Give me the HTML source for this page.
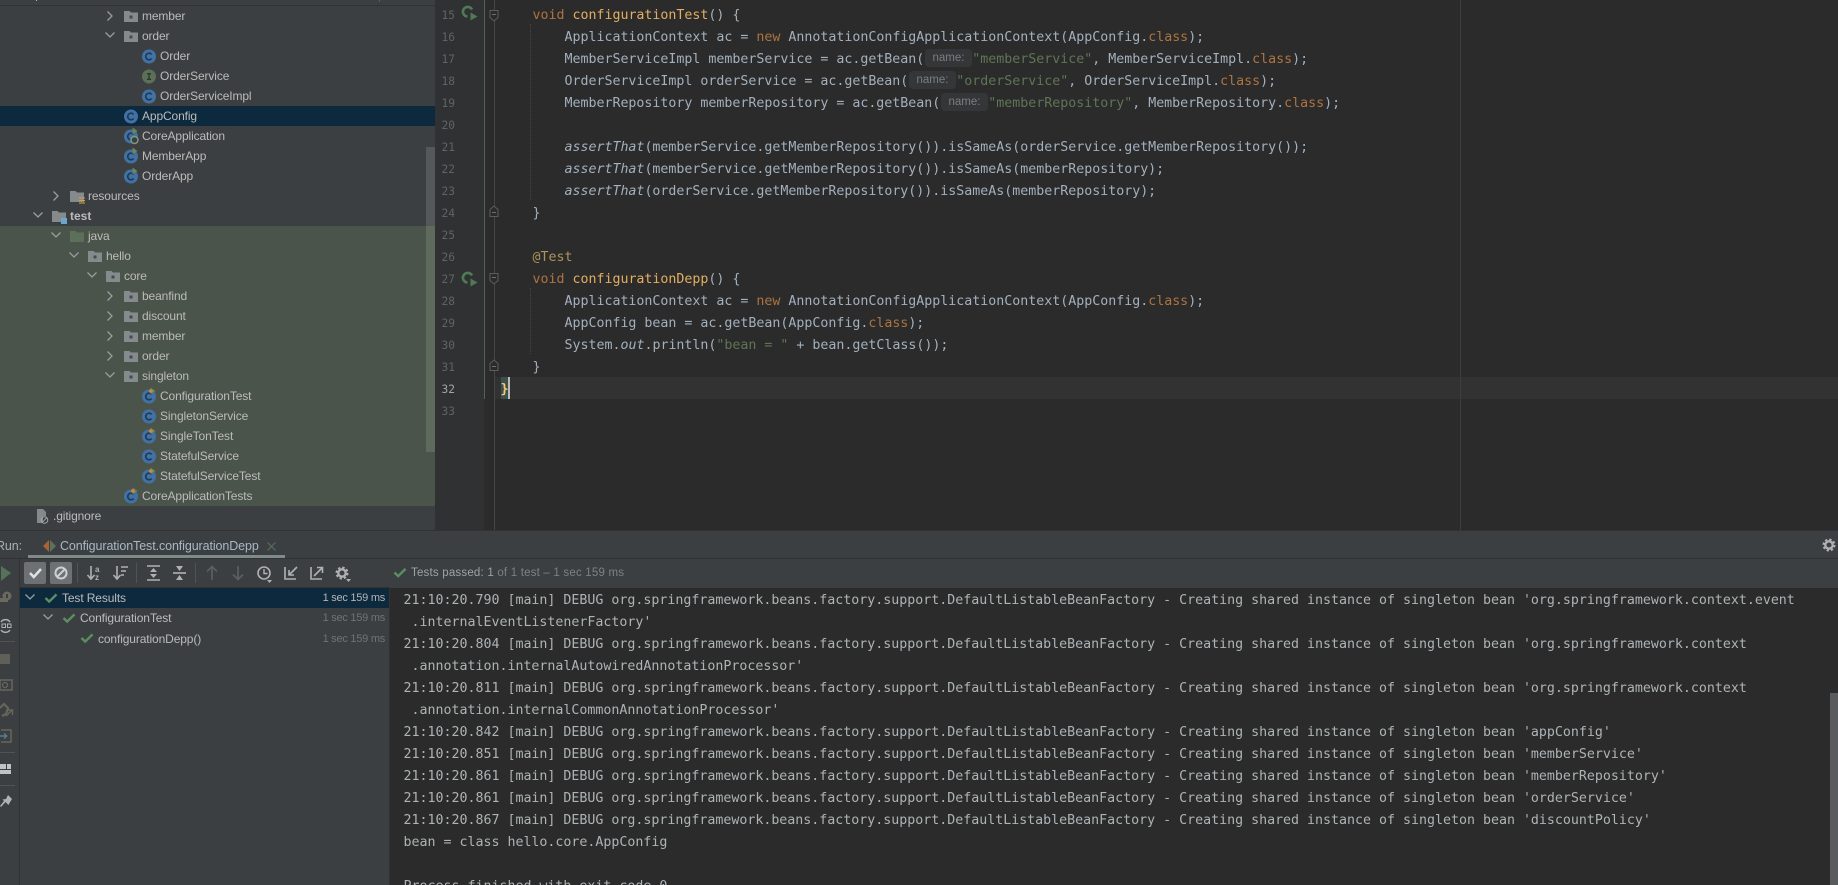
<!DOCTYPE html>
<html><head><meta charset="utf-8"><title>IDE</title>
<style>
html,body{margin:0;padding:0;background:#2b2b2b}
#r{position:relative;width:1838px;height:885px;overflow:hidden;background:#2b2b2b;font-family:"Liberation Sans",sans-serif}
#r div.b{position:absolute}
.t{position:absolute;height:20px;line-height:21px;font-size:12px;letter-spacing:-.12px;color:#bbb;white-space:nowrap}
.n{line-height:20px}
pre{position:absolute;margin:0;font-family:"DejaVu Sans Mono","Liberation Mono",monospace;font-size:13.29px;line-height:22px;color:#a3b0bd;white-space:pre}
.k{color:#ad7440}.m{color:#e3ae62}.s{color:#5f7555}.i{font-style:italic}.a{color:#ab9459}.y{color:#cc7832}
.h{position:absolute;width:47px;height:18px;background:#343638;border-radius:4px;color:#7a7e80;font:11.5px/18px "Liberation Sans",sans-serif;text-align:center}
.d{color:#6f7375;font-size:11px;letter-spacing:-.25px;line-height:20px}
</style></head><body><div id="r">
<!-- sidebar -->
<div class="b" style="left:0;top:0;width:435px;height:531px;background:#3c3f41"></div>
<div class="b" style="left:0;top:5px;width:435px;height:1px;background:#323232"></div>
<div class="b" style="left:0;top:106px;width:435px;height:20px;background:#0d293e"></div>
<div class="b" style="left:0;top:226px;width:435px;height:280px;background:#4b544a"></div>
<div class="b" style="left:426px;top:147px;width:9px;height:79px;background:#55585a"></div>
<div class="b" style="left:426px;top:226px;width:9px;height:226px;background:#5e6a5b"></div>
<div class="t" style="left:142px;top:6px">member</div>
<div class="t" style="left:142px;top:26px">order</div>
<div class="t" style="left:160px;top:46px">Order</div>
<div class="t" style="left:160px;top:66px">OrderService</div>
<div class="t" style="left:160px;top:86px">OrderServiceImpl</div>
<div class="t" style="left:142px;top:106px">AppConfig</div>
<div class="t" style="left:142px;top:126px">CoreApplication</div>
<div class="t" style="left:142px;top:146px">MemberApp</div>
<div class="t" style="left:142px;top:166px">OrderApp</div>
<div class="t" style="left:88px;top:186px">resources</div>
<div class="t" style="left:70px;top:206px;font-weight:bold;letter-spacing:0">test</div>
<div class="t" style="left:88px;top:226px">java</div>
<div class="t" style="left:106px;top:246px">hello</div>
<div class="t" style="left:124px;top:266px">core</div>
<div class="t" style="left:142px;top:286px">beanfind</div>
<div class="t" style="left:142px;top:306px">discount</div>
<div class="t" style="left:142px;top:326px">member</div>
<div class="t" style="left:142px;top:346px">order</div>
<div class="t" style="left:142px;top:366px">singleton</div>
<div class="t" style="left:160px;top:386px">ConfigurationTest</div>
<div class="t" style="left:160px;top:406px">SingletonService</div>
<div class="t" style="left:160px;top:426px">SingleTonTest</div>
<div class="t" style="left:160px;top:446px">StatefulService</div>
<div class="t" style="left:160px;top:466px">StatefulServiceTest</div>
<div class="t" style="left:142px;top:486px">CoreApplicationTests</div>
<div class="t" style="left:53px;top:506px">.gitignore</div>
<!-- editor -->
<div class="b" style="left:435px;top:0;width:49px;height:531px;background:#2f3133"></div>
<div class="b" style="left:484px;top:0;width:1px;height:399px;background:#4d6652"></div>
<div class="b" style="left:495px;top:377px;width:1343px;height:22px;background:#323232"></div>
<div class="b" style="left:494px;top:0;width:1px;height:531px;background:#454545"></div>
<div class="b" style="left:1460px;top:0;width:1px;height:531px;background:#3e3e3e"></div>
<div class="b" style="left:530px;top:24px;width:0;height:176px;border-left:1px dotted #454545"></div>
<div class="b" style="left:530px;top:288px;width:0;height:66px;border-left:1px dotted #454545"></div>
<div class="b" style="left:501px;top:377px;width:8px;height:22px;background:#3b514d"></div>
<div class="b" style="left:508px;top:377px;width:2px;height:22px;background:#bbb"></div>
<pre style="left:435px;top:5px;width:20px;text-align:right;font-size:11.2px;color:#606366">15
16
17
18
19
20
21
22
23
24
25
26
27
28
29
30
31
<span style="color:#a4a3a3">32</span>
33</pre>
<pre style="left:500.5px;top:5px">    <span class="k">void</span> <span class="m">configurationTest</span>() {
        ApplicationContext ac = <span class="k">new</span> AnnotationConfigApplicationContext(AppConfig.<span class="k">class</span>);
        MemberServiceImpl memberService = ac.getBean(      <span class="s">"memberService"</span>, MemberServiceImpl.<span class="k">class</span>);
        OrderServiceImpl orderService = ac.getBean(      <span class="s">"orderService"</span>, OrderServiceImpl.<span class="k">class</span>);
        MemberRepository memberRepository = ac.getBean(      <span class="s">"memberRepository"</span>, MemberRepository.<span class="k">class</span>);

        <span class="i">assertThat</span>(memberService.getMemberRepository()).isSameAs(orderService.getMemberRepository());
        <span class="i">assertThat</span>(memberService.getMemberRepository()).isSameAs(memberRepository);
        <span class="i">assertThat</span>(orderService.getMemberRepository()).isSameAs(memberRepository);
    }

    <span class="a">@Test</span>
    <span class="k">void</span> <span class="m">configurationDepp</span>() {
        ApplicationContext ac = <span class="k">new</span> AnnotationConfigApplicationContext(AppConfig.<span class="k">class</span>);
        AppConfig bean = ac.getBean(AppConfig.<span class="k">class</span>);
        System.<span class="i">out</span>.println(<span class="s">"bean = "</span> + bean.getClass());
    }
<span style="color:#ffc66d;font-weight:bold">}</span></pre>
<div class="h" style="left:925px;top:49px">name:</div>
<div class="h" style="left:909px;top:71px">name:</div>
<div class="h" style="left:941px;top:93px">name:</div>
<!-- bottom panel -->
<div class="b" style="left:0;top:530px;width:1838px;height:1px;background:#323232"></div>
<div class="b" style="left:0;top:531px;width:1838px;height:57px;background:#3c3f41"></div>
<div class="b" style="left:0;top:558px;width:1838px;height:1px;background:#323232"></div>
<div class="b" style="left:0;top:587px;width:390px;height:298px;background:#3c3f41"></div>
<div class="b" style="left:20px;top:587px;width:370px;height:1px;background:#323232"></div>
<div class="b" style="left:19px;top:559px;width:1px;height:326px;background:#323232"></div>
<div class="b" style="left:389px;top:587px;width:1px;height:298px;background:#323232"></div>
<div class="b" style="left:28px;top:555px;width:257px;height:3px;background:#7f8b88"></div>
<div class="b" style="left:20px;top:588px;width:369px;height:20px;background:#0d293e"></div>
<div class="t" style="left:-4px;top:536px;font-size:12.5px;color:#a9b0b5">Run:</div>
<div class="t" style="left:60px;top:536px;font-size:12.5px;letter-spacing:-.1px;color:#a9b7c6">ConfigurationTest.configurationDepp</div>
<div class="t" style="left:411px;top:563px;font-size:11.5px;letter-spacing:.2px;color:#9fa3a6">Tests passed: <span>1</span> <span style="color:#7c8184">of 1 test – 1 sec 159 ms</span></div>
<div class="t n" style="left:62px;top:588px">Test Results</div>
<div class="t n" style="left:80px;top:608px">ConfigurationTest</div>
<div class="t n" style="left:98px;top:629px">configurationDepp()</div>
<div class="t d" style="right:1453px;top:588px;color:#b5b5b5">1 sec 159 ms</div>
<div class="t d" style="right:1453px;top:608px">1 sec 159 ms</div>
<div class="t d" style="right:1453px;top:629px">1 sec 159 ms</div>
<!-- console -->
<div class="b" style="left:1830px;top:693px;width:8px;height:192px;background:#595b5c"></div>
<pre style="left:403.5px;top:590.3px;color:#aeb3b6">21:10:20.790 [main] DEBUG org.springframework.beans.factory.support.DefaultListableBeanFactory - Creating shared instance of singleton bean 'org.springframework.context.event
 .internalEventListenerFactory'
21:10:20.804 [main] DEBUG org.springframework.beans.factory.support.DefaultListableBeanFactory - Creating shared instance of singleton bean 'org.springframework.context
 .annotation.internalAutowiredAnnotationProcessor'
21:10:20.811 [main] DEBUG org.springframework.beans.factory.support.DefaultListableBeanFactory - Creating shared instance of singleton bean 'org.springframework.context
 .annotation.internalCommonAnnotationProcessor'
21:10:20.842 [main] DEBUG org.springframework.beans.factory.support.DefaultListableBeanFactory - Creating shared instance of singleton bean 'appConfig'
21:10:20.851 [main] DEBUG org.springframework.beans.factory.support.DefaultListableBeanFactory - Creating shared instance of singleton bean 'memberService'
21:10:20.861 [main] DEBUG org.springframework.beans.factory.support.DefaultListableBeanFactory - Creating shared instance of singleton bean 'memberRepository'
21:10:20.861 [main] DEBUG org.springframework.beans.factory.support.DefaultListableBeanFactory - Creating shared instance of singleton bean 'orderService'
21:10:20.867 [main] DEBUG org.springframework.beans.factory.support.DefaultListableBeanFactory - Creating shared instance of singleton bean 'discountPolicy'
bean = class hello.core.AppConfig

Process finished with exit code 0</pre>
<!-- icons -->
<svg width="1838" height="885" style="position:absolute;left:0;top:0" fill="none">
<defs>
<symbol id="chR" overflow="visible"><path d="M-2.5-4.5 2-0 -2.5 4.5" stroke="#9a9da0" stroke-width="1.3"/></symbol>
<symbol id="chD" overflow="visible"><path d="M-4.5-2.5 0 2-0 2 4.5-2.5" stroke="#9a9da0" stroke-width="1.3"/></symbol>
<symbol id="fo" overflow="visible"><path d="M0 0h5.5L7 1.5h7V11H0z" fill="#858a8d"/><rect x="5.5" y="4.5" width="3" height="3" fill="#47494b"/></symbol>
<symbol id="fp" overflow="visible"><path d="M0 0h5.5L7 1.5h7V11H0z" fill="#858a8d"/></symbol>
<symbol id="fj" overflow="visible"><path d="M0 0h5.5L7 1.5h7V11H0z" fill="#5c7059"/></symbol>
<symbol id="c" overflow="visible"><circle cx="7" cy="7" r="7" fill="#4272a4"/><path d="M9.6 4.9A3.3 3.3 0 1 0 9.6 9.1" stroke="#1e3a5a" stroke-width="1.7"/></symbol>
<symbol id="ii" overflow="visible"><circle cx="7" cy="7" r="7" fill="#5a7058"/><path d="M5 4.2h4M5 9.8h4M7 4.2v5.6" stroke="#2e352d" stroke-width="1.3"/></symbol>
<symbol id="rn" overflow="visible"><path d="M8.5-2 13.5 1.5 8.5 5z" fill="#6a8759"/></symbol>
<symbol id="tt" overflow="visible"><path d="M8.5-2 13.5 1.5 8.5 5z" fill="#6a8759"/><circle cx="8.8" cy="1.5" r="1.8" fill="#d8843a"/></symbol>
<symbol id="ck" overflow="visible"><path d="M-5.5 0-1.8 3.6 5.5-3.6" stroke="#5a8f62" stroke-width="2.4"/></symbol>
<symbol id="gear" overflow="visible"><circle r="5.2" stroke="#afb1b3" stroke-width="2.6" stroke-dasharray="2.2 1.9"/><circle r="3.7" stroke="#afb1b3" stroke-width="2.3"/></symbol>
<symbol id="gut" overflow="visible"><path d="M8 2.5A4.800 4.800 0 1 0 3.500 9.500" stroke="#4f7a55" stroke-width="2.600"/><path d="M6.500 5.500 13.500 9.500 6.500 13.500z" fill="#4f7a55"/></symbol>
<symbol id="fdn" overflow="visible"><path d="M.5.5h8v7l-4 3.5-4-3.5z" fill="#2b2b2b" stroke="#5c5c5c"/><path d="M2.5 4.5h4" stroke="#6e6e6e"/></symbol>
<symbol id="fup" overflow="visible"><path d="M.5 10.5h8v-7l-4-3.5-4 3.5z" fill="#2b2b2b" stroke="#5c5c5c"/><path d="M2.5 6.5h4" stroke="#6e6e6e"/></symbol>
</defs>
<!-- tree chevrons -->
<use href="#chR" x="110" y="16"/><use href="#chD" x="110" y="35"/><use href="#chR" x="56" y="196"/><use href="#chD" x="38" y="215"/><use href="#chD" x="56" y="235"/><use href="#chD" x="74" y="255"/><use href="#chD" x="92" y="275"/><use href="#chR" x="110" y="296"/><use href="#chR" x="110" y="316"/><use href="#chR" x="110" y="336"/><use href="#chR" x="110" y="356"/><use href="#chD" x="110" y="375"/>
<!-- folders -->
<use href="#fo" x="124" y="11"/><use href="#fo" x="124" y="31"/><use href="#fp" x="70" y="191"/><path d="M79 198h6M79 200.500h6M79 203h6" stroke="#d9a343"/><use href="#fp" x="52" y="211"/><rect x="61" y="218" width="6" height="6" fill="#6ea5c8"/><use href="#fj" x="70" y="231"/><use href="#fo" x="88" y="251"/><use href="#fo" x="106" y="271"/><use href="#fo" x="124" y="291"/><use href="#fo" x="124" y="311"/><use href="#fo" x="124" y="331"/><use href="#fo" x="124" y="351"/><use href="#fo" x="124" y="371"/>
<!-- classes -->
<use href="#c" x="142" y="49.500"/><use href="#ii" x="142" y="69.500"/><use href="#c" x="142" y="89.500"/><use href="#c" x="124" y="109.500"/><use href="#c" x="124" y="129.500"/><use href="#rn" x="124" y="129.500"/><circle cx="134.500" cy="140" r="3.500" fill="#3c3f41" stroke="#7d9a84" stroke-width="1.500"/><use href="#c" x="124" y="149.500"/><use href="#rn" x="124" y="149.500"/><use href="#c" x="124" y="169.500"/><use href="#rn" x="124" y="169.500"/>
<use href="#c" x="142" y="389.500"/><use href="#tt" x="142" y="389.500"/><use href="#c" x="142" y="409.500"/><use href="#c" x="142" y="429.500"/><use href="#tt" x="142" y="429.500"/><use href="#c" x="142" y="449.500"/><use href="#c" x="142" y="469.500"/><use href="#tt" x="142" y="469.500"/><use href="#c" x="124" y="489.500"/><use href="#tt" x="124" y="489.500"/>
<!-- gitignore -->
<path d="M37 509h6l3 3v4h-3v7h-6z" fill="#85898c"/><circle cx="44.500" cy="520" r="3.300" stroke="#a4a7a9"/><path d="M42.200 522.300 46.800 517.700" stroke="#a4a7a9"/>
<path d="M379.500 0v1.500" stroke="#5f6264"/><path d="M36.500 0v1" stroke="#bbb"/>
<!-- gutter icons -->
<use href="#gut" x="464" y="7"/><use href="#gut" x="464" y="273"/>
<use href="#fdn" x="489.500" y="10"/><use href="#fup" x="489.500" y="206"/><use href="#fdn" x="489.500" y="273"/><use href="#fup" x="489.500" y="360"/>
<!-- tab icon -->
<path d="M49 540 43 546 49 552z" fill="#a8623a"/><path d="M50 540 56 546 50 552z" fill="#5a735a"/>
<path d="M267.500 542.500 275.500 550.500M275.500 542.500 267.500 550.500" stroke="#56705f" stroke-width="1.100"/>
<use href="#gear" x="1829" y="545"/>
<!-- toolbar -->
<rect x="24" y="562" width="22" height="22" rx="2" fill="#6d7173"/><path d="M30 573 33.800 577 41 569" stroke="#dfe1e2" stroke-width="2.500"/>
<rect x="50" y="562" width="22" height="22" rx="2" fill="#6d7173"/><circle cx="61" cy="573" r="5.500" stroke="#cdd0d2" stroke-width="2"/><path d="M57.500 576.500 64.500 569.500" stroke="#cdd0d2" stroke-width="2"/>
<path d="M77.500 563v20M136.500 563v20M195.500 563v20" stroke="#515456"/>
<path d="M91 566v12M87.500 575 91 579 94.500 575" stroke="#afb1b3" stroke-width="1.600"/>
<text x="95" y="572" font-family="Liberation Sans" font-size="8" font-weight="bold" fill="#afb1b3">a</text><text x="95" y="580" font-family="Liberation Sans" font-size="8" font-weight="bold" fill="#afb1b3">z</text>
<path d="M117 566v12M113.500 575 117 579 120.500 575" stroke="#afb1b3" stroke-width="1.600"/><path d="M121 567h7M121 571h5M121 575h3" stroke="#afb1b3" stroke-width="1.600"/>
<path d="M147 566h13M147 580h13" stroke="#afb1b3" stroke-width="1.600"/><path d="M153.500 568 157 572H150zM153.500 578 157 574H150z" fill="#afb1b3"/>
<path d="M173 573h13" stroke="#afb1b3" stroke-width="1.600"/><path d="M179.500 571 176 566H183zM179.500 575 176 580H183z" fill="#afb1b3"/>
<path d="M212 580V567M207 571.500 212 566.500 217 571.500" stroke="#5a5e60" stroke-width="1.800"/>
<path d="M238 566V579M233 574.500 238 579.500 243 574.500" stroke="#5a5e60" stroke-width="1.800"/>
<circle cx="264" cy="573" r="6" stroke="#afb1b3" stroke-width="1.600"/><path d="M264 569v4.500h3.500" stroke="#afb1b3" stroke-width="1.400"/><path d="M267 580h5l-2.500 3z" fill="#afb1b3"/>
<path d="M285 567v12h11" stroke="#afb1b3" stroke-width="1.600"/><path d="M297 567 289 575M289 570v5h5" stroke="#afb1b3" stroke-width="1.600"/>
<path d="M311 567v12h11" stroke="#afb1b3" stroke-width="1.600"/><path d="M314 576 322 568M317 567.500h5.500V573" stroke="#afb1b3" stroke-width="1.600"/>
<use href="#gear" x="342" y="573"/><path d="M346 579h5l-2.500 3z" fill="#afb1b3"/>
<use href="#ck" x="400" y="572.500"/>
<!-- test tree -->
<use href="#chD" x="30" y="597"/><use href="#ck" x="51" y="598"/><use href="#chD" x="48" y="617"/><use href="#ck" x="69" y="618"/><use href="#ck" x="87" y="638"/>
<!-- left strip -->
<path d="M1 566 11 573 1 581z" fill="#56735a"/>
<circle cx="7" cy="596" r="4.500" fill="#6b6a5e"/><path d="M0 600h8" stroke="#6b6a5e" stroke-width="4"/><rect x="6" y="594" width="2" height="4" fill="#3c3f41"/>
<path d="M10 622A5.500 5.500 0 0 0 1 622M1 630A5.500 5.500 0 0 0 10 630" stroke="#aeb1b3" stroke-width="1.500"/><rect x="2" y="624" width="3.500" height="3.500" stroke="#aeb1b3"/><rect x="7.500" y="624" width="3.500" height="3.500" stroke="#aeb1b3"/>
<path d="M0 641.500h15M0 752.500h15M0 785.500h15" stroke="#515456"/>
<rect x="0" y="654" width="10" height="10" fill="#5f6058"/>
<rect x="0" y="680" width="12" height="10" stroke="#66655d" stroke-width="1.500"/><circle cx="5" cy="685" r="2.500" stroke="#66655d" stroke-width="1.300"/>
<path d="M0 708 4 704 8 708 6 714 2 716" stroke="#66655d" stroke-width="2.200"/><path d="M6 716 12 710M8 710h4.500V715" stroke="#66655d" stroke-width="1.500"/>
<path d="M1 730H11V742H1" stroke="#66655d" stroke-width="1.500"/><path d="M0 736H6M4 733.500 6.800 736 4 738.500" stroke="#5b7c8f" stroke-width="1.400"/>
<path d="M0 764h6v5H0zM7 764h4v5H7zM0 770h11v4H0z" fill="#c0c3c5"/>
<path d="M8 795 12 799 9.500 803 8.500 805 5.500 802 1 807 0 806 4 801 2.500 799.500 6 799z" fill="#aeb4b6"/>
</svg>
</div></body></html>
